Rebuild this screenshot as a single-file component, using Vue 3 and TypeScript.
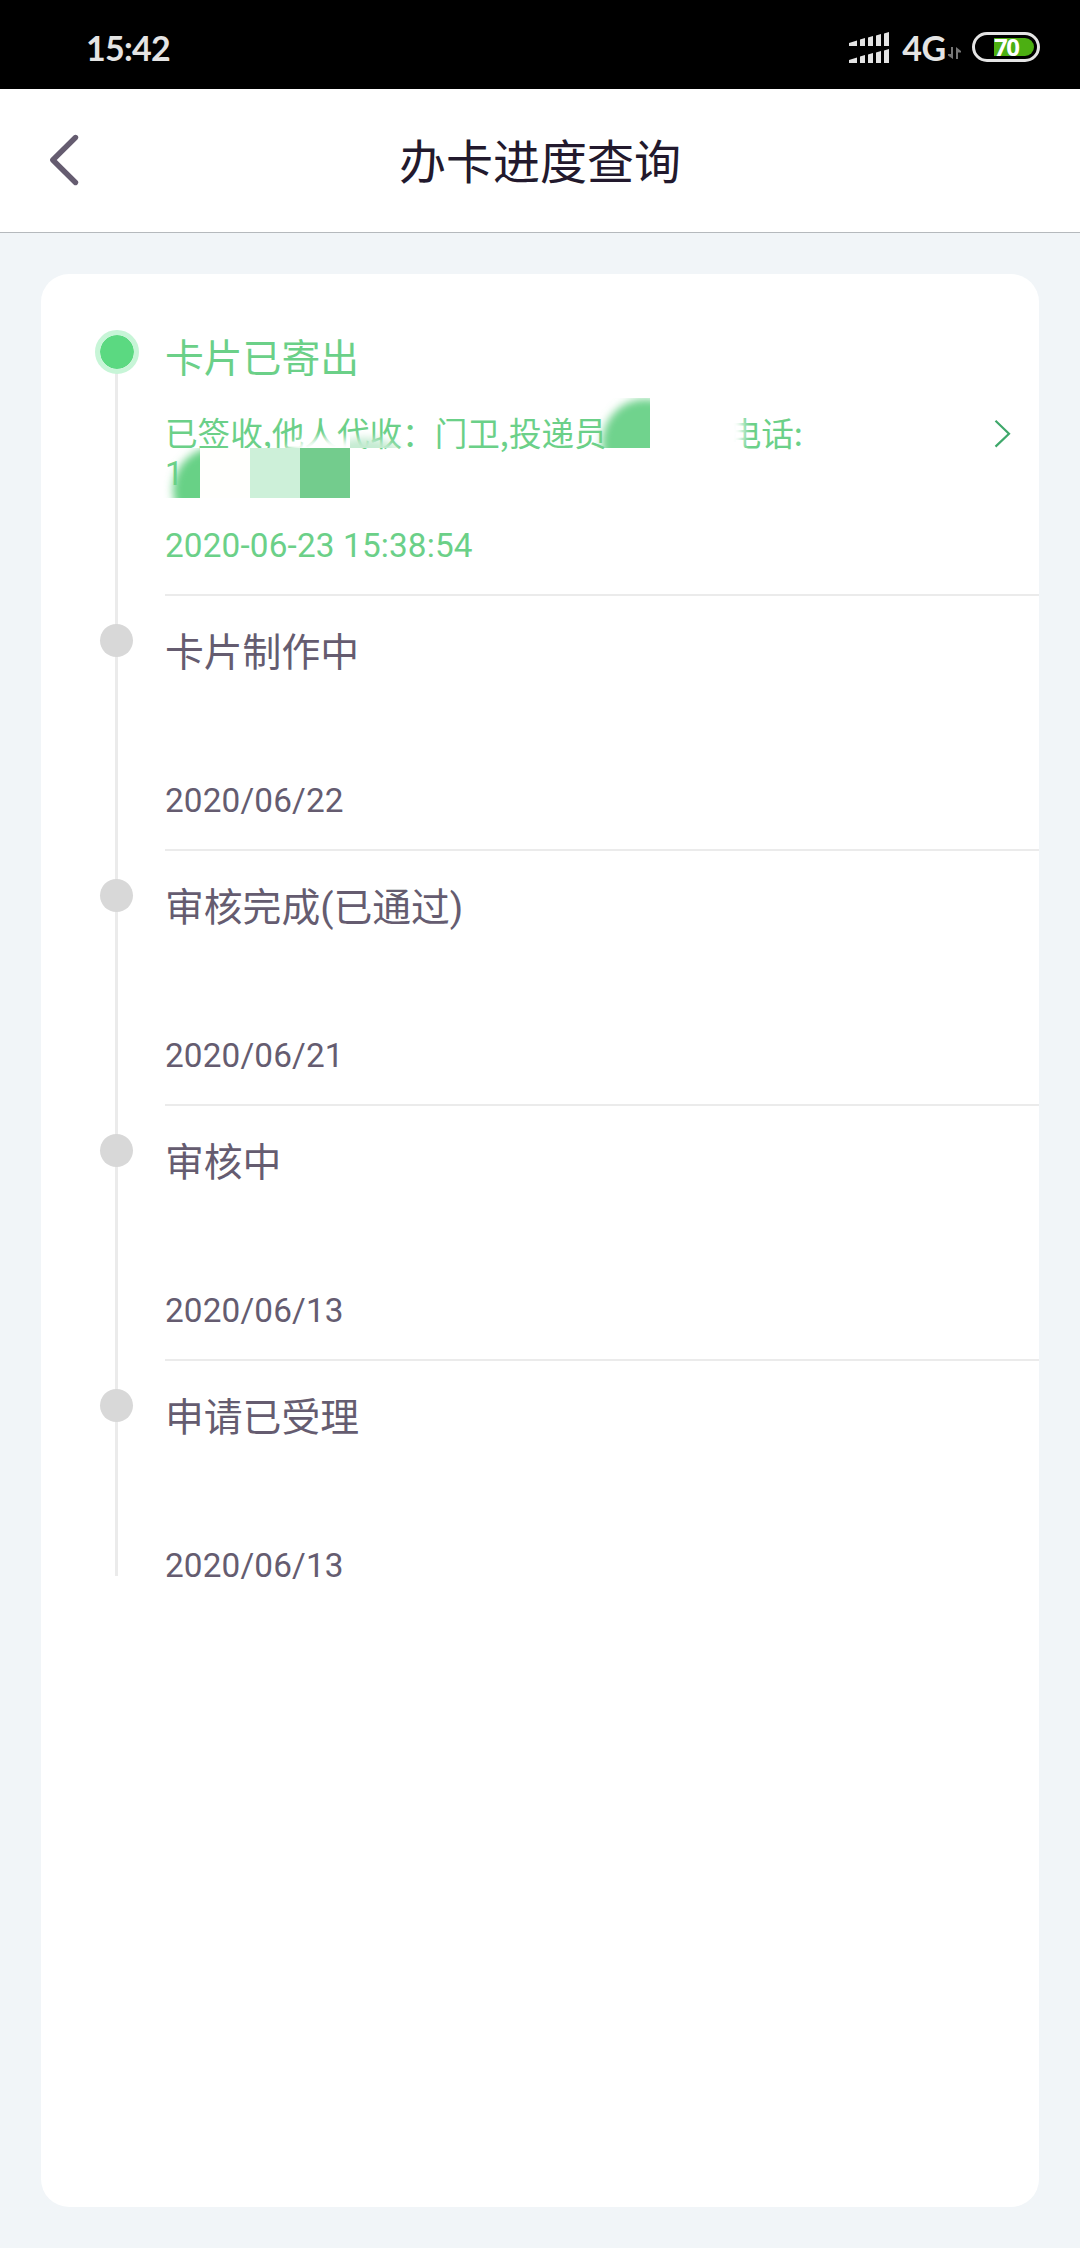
<script setup lang="ts">
interface Step {
  title: string
  detail?: boolean
  time: string
}

const steps: Step[] = [
  { title: '卡片已寄出', detail: true, time: '2020-06-23 15:38:54' },
  { title: '卡片制作中', time: '2020/06/22' },
  { title: '审核完成(已通过)', time: '2020/06/21' },
  { title: '审核中', time: '2020/06/13' },
  { title: '申请已受理', time: '2020/06/13' },
]
</script>

<template>
  <div class="page">
    <div class="status">
      <span class="clock">15:42</span>
      <div class="indicators">
        <svg class="signal" width="41" height="32" viewBox="0 0 41 32" fill="#e4e4e4">
          <path d="M0 11 8 8.500V14H0ZM11 7.500 16 6V14H11ZM19 5.500 24 4V14H19ZM27 3.500 32 2V14H27ZM35 1.500 40 0V14H35Z" />
          <path d="M0 28 8 25.500V31H0ZM11 24.500 16 23V31H11ZM19 22.500 24 21V31H19ZM27 20.500 32 19V31H27ZM35 18.500 40 17V31H35Z" />
        </svg>
        <span class="network">4G</span>
        <svg class="arrows" width="14" height="14" viewBox="0 0 14 14" fill="#777">
          <path d="M3 0H5V12L0 8.500V7H3ZM8 12V0L13 4V5.500H10V12Z" />
        </svg>
        <div class="battery"><div class="charge"></div><span>70</span></div>
      </div>
    </div>

    <header class="header">
      <svg class="back" width="32" height="54" viewBox="0 0 32 54">
        <path d="M27.500 4.500 4.800 27 27.500 49.500" fill="none" stroke="#655c70" stroke-width="5.400" stroke-linecap="round" stroke-linejoin="round" />
      </svg>
      <h1>办卡进度查询</h1>
    </header>

    <main class="card">
      <section v-for="(step, i) in steps" :key="i" class="step" :class="{ active: step.detail }">
        <div class="rail"><i class="dot"></i></div>
        <div class="body">
          <h2>{{ step.title }}</h2>
          <div v-if="step.detail" class="detail">
            <p>已签收,他人代收：门卫,投递员<span class="gap"></span>电话:</p>
            <p class="phone">1</p>
            <svg class="smudge" width="660" height="110" viewBox="160 390 660 110">
              <defs>
                <filter id="soft" x="-50%" y="-50%" width="200%" height="200%"><feGaussianBlur stdDeviation="4" /></filter>
                <clipPath id="c1"><rect x="160" y="448" width="40" height="50" /></clipPath>
                <clipPath id="c2"><rect x="590" y="398" width="60" height="50" /></clipPath>
                <clipPath id="c3"><rect x="200" y="420" width="150" height="28" /></clipPath>
                <clipPath id="c4"><rect x="350" y="420" width="60" height="28" /></clipPath>
              </defs>
              <g clip-path="url(#c3)"><ellipse cx="328" cy="456" rx="46" ry="18" fill="#fff" filter="url(#soft)" /></g>
              <g clip-path="url(#c4)"><ellipse cx="364" cy="453" rx="36" ry="15" fill="#c4ebd1" filter="url(#soft)" /></g>
              <g clip-path="url(#c1)"><circle cx="216" cy="490" r="43" fill="#68d186" filter="url(#soft)" /></g>
              <rect x="200" y="448" width="50" height="50" fill="#fffffd" />
              <rect x="250" y="448" width="50" height="50" fill="#cdf0d9" />
              <rect x="300" y="448" width="50" height="50" fill="#73cc8d" />
              <g clip-path="url(#c2)"><circle cx="646" cy="443" r="44" fill="#70d38d" filter="url(#soft)" /></g>
              <ellipse cx="730" cy="432" rx="14" ry="28" fill="#fff" filter="url(#soft)" />
            </svg>
            <svg class="more" width="18" height="30" viewBox="0 0 18 30">
              <path d="M1.500 1.800 15 14.700 1.500 27.600" fill="none" stroke="#3fa86b" stroke-width="2.200" />
            </svg>
          </div>
          <time>{{ step.time }}</time>
        </div>
      </section>
    </main>
  </div>
</template>

<style>
body { background: #f1f5f8; }
</style>

<style scoped>
.page {
  width: 1080px;
  height: 2248px;
  display: flex;
  flex-direction: column;
  background: #f1f5f8;
  font-family: Roboto, "Noto Sans CJK SC", sans-serif;
}
.status {
  height: 89px;
  flex: none;
  box-sizing: border-box;
  padding: 0 40px 0 86px;
  display: flex;
  justify-content: space-between;
  background: #000;
  color: #e4e4e4;
  font-family: Lato, sans-serif;
  font-weight: 700;
}
.clock { font-size: 34px; line-height: 40px; margin-top: 28px; letter-spacing: -0.700px; }
.indicators { display: flex; align-items: flex-start; }
.signal { margin-top: 32px; }
.network { font-size: 34px; line-height: 40px; margin: 28px 0 0 12px; letter-spacing: -0.300px; }
.arrows { margin: 47px 0 0 2px; }
.battery {
  position: relative;
  box-sizing: border-box;
  width: 68px;
  height: 30px;
  margin: 32px 0 0 10px;
  border: 3px solid #e4e4e4;
  border-radius: 15px;
}
.charge {
  width: 40px;
  height: 18px;
  margin: 3px 3px 0 auto;
  border-radius: 0 9px 9px 0;
  background: #4caf12;
}
.battery span {
  position: absolute;
  left: 19px;
  top: -1px;
  font: 700 24px/25px "Open Sans", sans-serif;
  letter-spacing: -1.500px;
  color: #fff;
}
.header {
  flex: none;
  height: 144px;
  box-sizing: border-box;
  display: grid;
  grid-template-columns: 200px 1fr 200px;
  align-items: center;
  border-bottom: 1px solid #b5b9bd;
  background: #fff;
}
.back { margin: 0 0 1px 48px; }
h1 { margin: 5px 0 0; font-size: 47px; line-height: 60px; font-weight: 400; text-align: center; color: #22192d; }
.card {
  flex: none;
  height: 1933px;
  margin: 41px 41px 0;
  border-radius: 28px;
  background: #fff;
}
.step { display: flex; height: 255px; color: #655c70; }
.step.active { height: 322px; color: #6bd088; }
.rail {
  width: 124px;
  flex: none;
  box-sizing: border-box;
  padding: 28px 0 0 59px;
  background: linear-gradient(#ebebeb, #ebebeb) 74px 0 / 3px 100% no-repeat;
}
.step:last-child .rail { height: 215px; }
.active .rail { padding: 56px 0 0 54px; background-position: 74px 78px; }
.dot { display: block; width: 33px; height: 33px; border-radius: 50%; background: #d8d8d8; }
.active .dot { box-sizing: border-box; width: 44px; height: 44px; border: 5px solid #c7f5d7; background: #5bd981; background-clip: padding-box; }
.body {
  flex: 1;
  display: flex;
  flex-direction: column;
  border-bottom: 2px solid #ebebeb;
}
.step:last-child .body { border-bottom: 0; padding-bottom: 2px; }
h2 { margin: 29px 0 0; font-size: 38.800px; line-height: 56px; font-weight: 400; }
.active h2 { margin-top: 57px; }
.detail { position: relative; height: 79px; margin-top: 25px; }
.detail p { margin: 0; font-size: 32.600px; line-height: 39px; white-space: nowrap; font-family: "Noto Sans CJK SC", sans-serif; }
.detail .phone { padding-top: 4px; font-family: Roboto, sans-serif; }
.gap { display: inline-block; width: 122px; }
.smudge { position: absolute; left: -5px; top: -22px; }
.more { position: absolute; left: 829px; top: 7px; }
time { display: block; margin: auto 0 28px; font-size: 33.300px; line-height: 40px; letter-spacing: 0.150px; }
</style>
